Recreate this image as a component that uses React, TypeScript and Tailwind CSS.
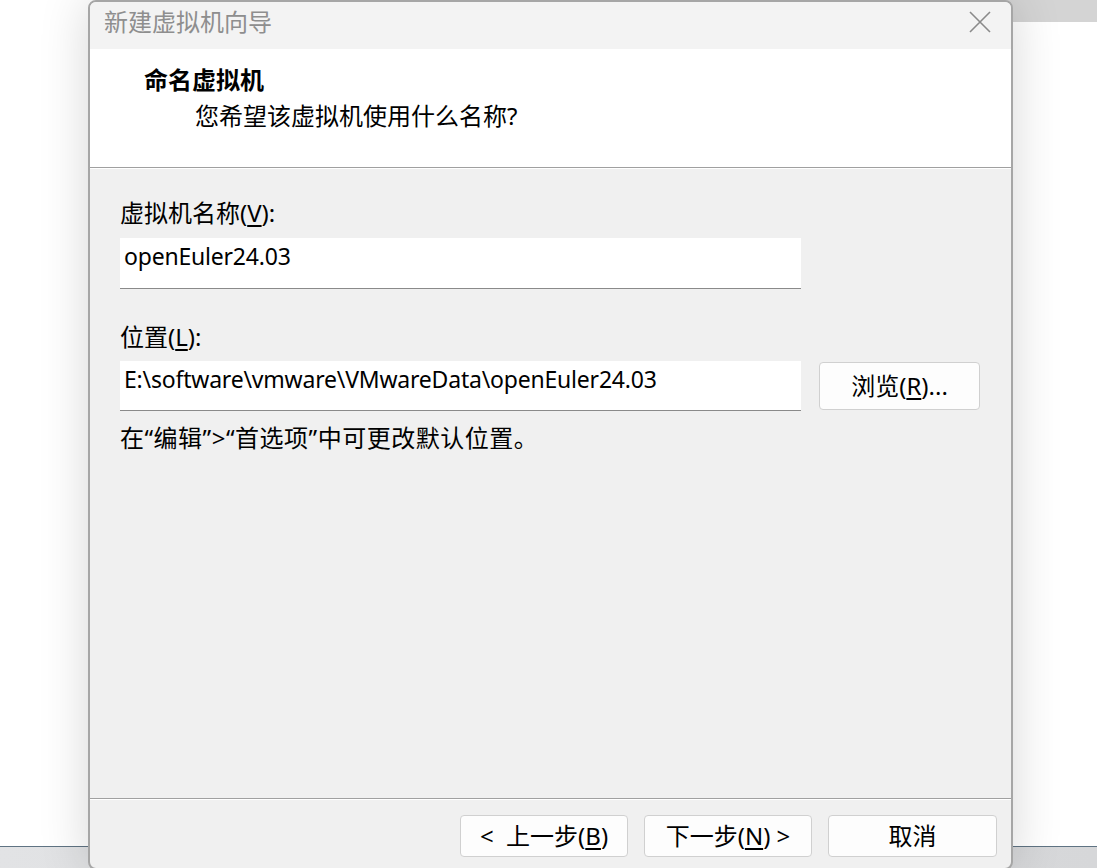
import React from "react";

const FONT = { fontFamily: '"Noto Sans", "Noto Sans CJK SC", sans-serif' };

function Btn({ children, className = "" }: { children: React.ReactNode; className?: string }) {
  return (
    <div
      className={`flex items-center justify-center rounded-[4px] border border-[#d0d0d0] bg-[#fdfdfd] text-[24px] leading-[32px] text-black ${className}`}
    >
      {children}
    </div>
  );
}

export default function App() {
  return (
    <div className="relative h-[868px] w-[1097px] overflow-hidden bg-white" style={FONT}>
      {/* background window pieces */}
      <div className="absolute right-0 top-0 h-[22px] w-[120px] bg-[#d4d4d4]" />
      <div className="absolute bottom-0 left-0 h-[22px] w-full border-t border-[#5f7383] bg-gradient-to-r from-[#e2e3e5] to-[#d6d7d9]" />

      {/* dialog */}
      <div className="absolute left-[88px] top-0 flex h-[870px] w-[925px] flex-col overflow-hidden rounded-[8px] border-2 border-[#a6a6a6] bg-[#f0f0f0] shadow-[0_0_50px_rgba(0,0,0,0.16)]">
        {/* title bar */}
        <div className="flex h-[47px] shrink-0 items-center justify-between bg-[#f3f3f3] pl-[14px] pr-[20px]">
          <span className="mt-[-7px] text-[24px] leading-[32px] text-[#8e8e8e]">新建虚拟机向导</span>
          <svg width="22" height="22" viewBox="0 0 22 22" className="mt-[-7px]">
            <path d="M1 1 L21 21 M21 1 L1 21" stroke="#8a8a8a" strokeWidth="1.6" fill="none" />
          </svg>
        </div>

        {/* header */}
        <div className="h-[119px] shrink-0 border-b border-[#a0a0a0] bg-white pl-[54px] pt-[15px]">
          <div className="text-[24px] font-bold leading-[32px] text-black">命名虚拟机</div>
          <div className="mt-[4px] pl-[51px] text-[24px] leading-[32px] text-black">您希望该虚拟机使用什么名称?</div>
        </div>
        <div className="h-px shrink-0 bg-white" />

        {/* body */}
        <div className="flex flex-1 flex-col pl-[30px] pt-[28px] text-[24px] leading-[32px] text-black">
          <div>
            虚拟机名称(<span className="underline underline-offset-[3px]">V</span>):
          </div>
          <div className="mt-[9px] h-[51px] w-[681px] border-b border-[#8a8a8a] bg-white pl-[4px] pt-[2px] text-[23px] tracking-[-0.2px]">
            openEuler24.03
          </div>

          <div className="mt-[32px]">
            位置(<span className="underline underline-offset-[3px]">L</span>):
          </div>
          <div className="mt-[8px] flex items-start gap-[18px]">
            <div className="h-[50px] w-[681px] border-b border-[#8a8a8a] bg-white pl-[4px] pt-[2px] text-[23px] tracking-[-0.2px]">
              E:\software\vmware\VMwareData\openEuler24.03
            </div>
            <Btn className="mt-px h-[48px] w-[161px]">
              浏览(<span className="underline underline-offset-[3px]">R</span>)...
            </Btn>
          </div>
          <div className="mt-[11px] tracking-[0.5px]">在“编辑”&gt;“首选项”中可更改默认位置。</div>
        </div>

        {/* footer */}
        <div className="h-[70px] shrink-0 border-t border-[#a0a0a0]">
          <div className="flex h-full justify-end gap-[16px] border-t border-white pr-[14px] pt-[15px]">
            <Btn className="h-[42px] w-[168px]">
              &lt;&nbsp; 上一步(<span className="underline underline-offset-[3px]">B</span>)
            </Btn>
            <Btn className="h-[42px] w-[168px]">
              下一步(<span className="underline underline-offset-[3px]">N</span>) &gt;
            </Btn>
            <Btn className="h-[42px] w-[169px]">取消</Btn>
          </div>
        </div>
      </div>
    </div>
  );
}
